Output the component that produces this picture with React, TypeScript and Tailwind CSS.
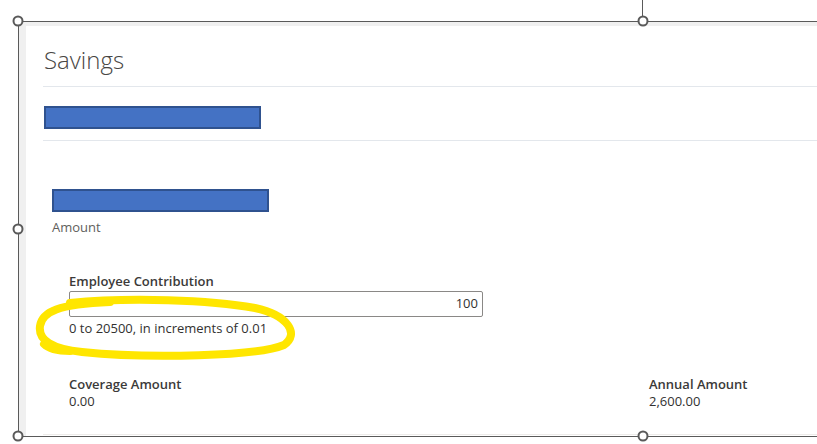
import React from 'react'

const font = { fontFamily: '"Open Sans", "Noto Sans", "Liberation Sans", sans-serif' }

// selection handle drawn over the picture frame
const Handle = ({ x, y }: { x: number; y: number }) => (
  <div
    className="absolute w-[11px] h-[11px] rounded-full bg-white border-2 border-[#5a5a5a] -translate-x-1/2 -translate-y-1/2"
    style={{ left: x, top: y }}
  />
)

const BlueBar = () => (
  <div className="w-[217px] h-[23px] bg-[#4472c4] border-2 border-[#2f528f]" />
)

const Field = ({ label, value }: { label: string; value: string }) => (
  <div className="flex flex-col">
    <div className="text-[13px] font-semibold leading-[18px] text-[#3b3a39]">{label}</div>
    <div className="text-[13px] leading-[17px]">{value}</div>
  </div>
)

export default function App() {
  return (
    <div className="relative w-[817px] h-[444px] overflow-hidden bg-white text-[#323130]" style={font}>
      {/* selection frame */}
      <div className="ml-[18px] mt-[21px] w-[1260px] h-[416px] border-l border-t border-b border-[#5a5a5a]">
        <div className="h-full bg-[#f0f0f0] pt-[4px] pl-[7px]">
          <div className="h-full bg-white pl-[17px] flex flex-col">
            <div className="h-[61px] border-b border-[#e3e7ec] flex items-center pl-[1px]">
              <h1 className="text-[24px] font-light text-[#484644] pt-[8px]">Savings</h1>
            </div>
            <div className="h-[54px] border-b border-[#e3e7ec] flex items-center pl-[1px] pt-[8px]">
              <BlueBar />
            </div>

            <div className="pl-[9px] pt-[48px]">
              <BlueBar />
              <div className="text-[13px] text-[#605e5c] mt-[6px] leading-[18px]">Amount</div>
            </div>

            <div className="pl-[26px] pt-[36px] w-[440px] flex flex-col">
              <div className="text-[13px] font-semibold leading-[18px] text-[#3b3a39]">Employee Contribution</div>
              <div className="mt-[1px] h-[26px] w-[414px] border border-[#8a8886] rounded-[2px] flex items-center justify-end pr-[4px] text-[13px]">
                100
              </div>
              <div className="text-[13px] leading-[18px] mt-[2px]">0 to 20500, in increments of 0.01</div>
            </div>

            <div className="pl-[26px] pt-[38px] flex">
              <div className="w-[580px]">
                <Field label="Coverage Amount" value="0.00" />
              </div>
              <Field label="Annual Amount" value="2,600.00" />
            </div>
            <div className="mt-[24px] border-b border-[#edebe9]" />
          </div>
        </div>
      </div>

      {/* rotation stem */}
      <div className="absolute left-[642px] top-0 w-[1px] h-[17px] bg-[#5a5a5a]" />

      <Handle x={18} y={21} />
      <Handle x={643} y={21} />
      <Handle x={18} y={229} />
      <Handle x={18} y={436} />
      <Handle x={643} y={436} />

      {/* highlighter loop */}
      <svg className="absolute left-0 top-0 pointer-events-none" width="817" height="444">
        <path
          d="M 70 303 C 130 297, 210 300, 255 308 C 288 315, 300 334, 284 345 C 258 356, 150 359, 82 352 C 52 349, 38 340, 40 326 C 42 312, 58 304, 110 302"
          fill="none"
          stroke="#ffe600"
          strokeWidth="8"
          strokeLinecap="round"
        />
        <path d="M 44 344 C 50 350, 60 351, 70 351" fill="none" stroke="#ffe600" strokeWidth="8" strokeLinecap="round" />
      </svg>
    </div>
  )
}
